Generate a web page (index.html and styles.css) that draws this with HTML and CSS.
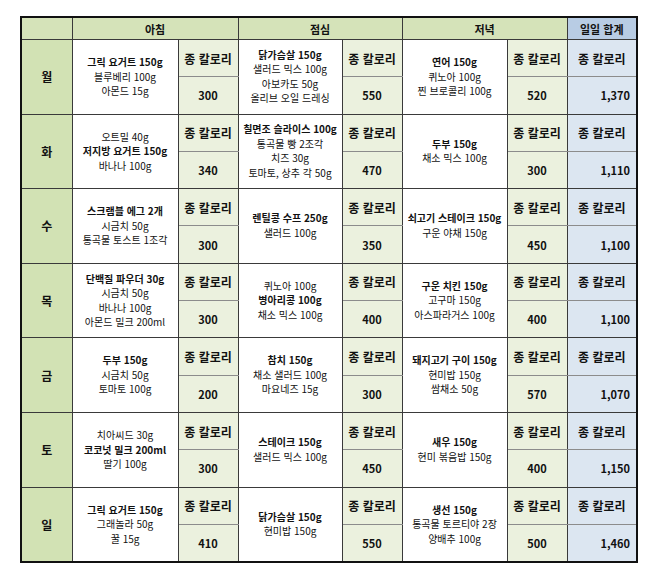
FILE: index.html
```html
<!DOCTYPE html>
<html lang="ko">
<head>
<meta charset="utf-8">
<title>주간 식단표</title>
<link rel="stylesheet" href="styles.css">
</head>
<body>
<table class="plan">
  <colgroup>
    <col class="c-day"><col class="c-food1"><col class="c-cal"><col class="c-food2"><col class="c-cal"><col class="c-food3"><col class="c-cal"><col class="c-total">
  </colgroup>
  <thead>
    <tr class="head">
      <th class="corner"></th>
      <th colspan="2" class="meal">아침</th>
      <th colspan="2" class="meal">점심</th>
      <th colspan="2" class="meal">저녁</th>
      <th class="total-head">일일 합계</th>
    </tr>
  </thead>
  <tbody>
    <tr class="top">
      <th rowspan="2" class="day">월</th>
      <td rowspan="2" class="food"><b>그릭 요거트 150g</b><br>블루베리 100g<br>아몬드 15g</td>
      <td class="label">종 칼로리</td>
      <td rowspan="2" class="food"><b>닭가슴살 150g</b><br>샐러드 믹스 100g<br>아보카도 50g<br>올리브 오일 드레싱</td>
      <td class="label">종 칼로리</td>
      <td rowspan="2" class="food"><b>연어 150g</b><br>퀴노아 100g<br>찐 브로콜리 100g</td>
      <td class="label">종 칼로리</td>
      <td class="tlabel">종 칼로리</td>
    </tr>
    <tr class="bottom">
      <td class="num">300</td><td class="num">550</td><td class="num">520</td><td class="tnum">1,370</td>
    </tr>

    <tr class="top">
      <th rowspan="2" class="day">화</th>
      <td rowspan="2" class="food">오트밀 40g<br><b>저지방 요거트 150g</b><br>바나나 100g</td>
      <td class="label">종 칼로리</td>
      <td rowspan="2" class="food"><b>칠면조 슬라이스 100g</b><br>통곡물 빵 2조각<br>치즈 30g<br>토마토, 상추 각 50g</td>
      <td class="label">종 칼로리</td>
      <td rowspan="2" class="food"><b>두부 150g</b><br>채소 믹스 100g</td>
      <td class="label">종 칼로리</td>
      <td class="tlabel">종 칼로리</td>
    </tr>
    <tr class="bottom">
      <td class="num">340</td><td class="num">470</td><td class="num">300</td><td class="tnum">1,110</td>
    </tr>

    <tr class="top">
      <th rowspan="2" class="day">수</th>
      <td rowspan="2" class="food"><b>스크램블 에그 2개</b><br>시금치 50g<br>통곡물 토스트 1조각</td>
      <td class="label">종 칼로리</td>
      <td rowspan="2" class="food"><b>렌틸콩 수프 250g</b><br>샐러드 100g</td>
      <td class="label">종 칼로리</td>
      <td rowspan="2" class="food"><b>쇠고기 스테이크 150g</b><br>구운 야채 150g</td>
      <td class="label">종 칼로리</td>
      <td class="tlabel">종 칼로리</td>
    </tr>
    <tr class="bottom">
      <td class="num">300</td><td class="num">350</td><td class="num">450</td><td class="tnum">1,100</td>
    </tr>

    <tr class="top">
      <th rowspan="2" class="day">목</th>
      <td rowspan="2" class="food"><b>단백질 파우더 30g</b><br>시금치 50g<br>바나나 100g<br>아몬드 밀크 200ml</td>
      <td class="label">종 칼로리</td>
      <td rowspan="2" class="food">퀴노아 100g<br><b>병아리콩 100g</b><br>채소 믹스 100g</td>
      <td class="label">종 칼로리</td>
      <td rowspan="2" class="food"><b>구운 치킨 150g</b><br>고구마 150g<br>아스파라거스 100g</td>
      <td class="label">종 칼로리</td>
      <td class="tlabel">종 칼로리</td>
    </tr>
    <tr class="bottom">
      <td class="num">300</td><td class="num">400</td><td class="num">400</td><td class="tnum">1,100</td>
    </tr>

    <tr class="top">
      <th rowspan="2" class="day">금</th>
      <td rowspan="2" class="food"><b>두부 150g</b><br>시금치 50g<br>토마토 100g</td>
      <td class="label">종 칼로리</td>
      <td rowspan="2" class="food"><b>참치 150g</b><br>채소 샐러드 100g<br>마요네즈 15g</td>
      <td class="label">종 칼로리</td>
      <td rowspan="2" class="food"><b>돼지고기 구이 150g</b><br>현미밥 150g<br>쌈채소 50g</td>
      <td class="label">종 칼로리</td>
      <td class="tlabel">종 칼로리</td>
    </tr>
    <tr class="bottom">
      <td class="num">200</td><td class="num">300</td><td class="num">570</td><td class="tnum">1,070</td>
    </tr>

    <tr class="top">
      <th rowspan="2" class="day">토</th>
      <td rowspan="2" class="food">치아씨드 30g<br><b>코코넛 밀크 200ml</b><br>딸기 100g</td>
      <td class="label">종 칼로리</td>
      <td rowspan="2" class="food"><b>스테이크 150g</b><br>샐러드 믹스 100g</td>
      <td class="label">종 칼로리</td>
      <td rowspan="2" class="food"><b>새우 150g</b><br>현미 볶음밥 150g</td>
      <td class="label">종 칼로리</td>
      <td class="tlabel">종 칼로리</td>
    </tr>
    <tr class="bottom">
      <td class="num">300</td><td class="num">450</td><td class="num">400</td><td class="tnum">1,150</td>
    </tr>

    <tr class="top">
      <th rowspan="2" class="day">일</th>
      <td rowspan="2" class="food"><b>그릭 요거트 150g</b><br>그래놀라 50g<br>꿀 15g</td>
      <td class="label">종 칼로리</td>
      <td rowspan="2" class="food"><b>닭가슴살 150g</b><br>현미밥 150g</td>
      <td class="label">종 칼로리</td>
      <td rowspan="2" class="food"><b>생선 150g</b><br>통곡물 토르티야 2장<br>양배추 100g</td>
      <td class="label">종 칼로리</td>
      <td class="tlabel">종 칼로리</td>
    </tr>
    <tr class="bottom">
      <td class="num">410</td><td class="num">550</td><td class="num">500</td><td class="tnum">1,460</td>
    </tr>
  </tbody>
</table>
</body>
</html>
```

FILE: styles.css
```css
html, body {
  margin: 0;
  padding: 0;
  background: #ffffff;
}

body {
  padding: 16px 0 0 20px;
  font-family: "Noto Sans CJK KR", "Noto Sans", sans-serif;
  color: #111;
}

.plan {
  border-collapse: collapse;
  table-layout: fixed;
  width: 616px;
  border: 2px solid #111;
}

.c-day { width: 51px; }
.c-food1 { width: 106px; }
.c-cal { width: 60px; }
.c-food2 { width: 104px; }
.c-food3 { width: 105px; }
.c-total { width: 70px; }

.plan th,
.plan td {
  border: 1px solid #3a3a3a;
  padding: 0;
  text-align: center;
  vertical-align: middle;
}

.head th {
  height: 21px;
  background: #d5e3b9;
  font-size: 11px;
  font-weight: 700;
}

.head .total-head {
  background: #b8cce4;
}

.top td,
.top th {
  height: 36.3px;
}

.bottom td {
  height: 36.3px;
}

.day {
  background: #d2e2b4;
  font-size: 12px;
  font-weight: 700;
}

.food {
  background: #ffffff;
  font-size: 10px;
  line-height: 14.5px;
  font-weight: 400;
  white-space: nowrap;
}

.food b {
  font-weight: 700;
}

.label {
  background: #ebf1de;
  font-size: 12px;
  font-weight: 700;
  border-bottom-color: #8c8c8c !important;
}

.num {
  background: #ebf1de;
  font-size: 11px;
  font-weight: 700;
}

.tlabel {
  background: #dce6f1;
  font-size: 12px;
  font-weight: 700;
  border-bottom-color: #8c8c8c !important;
}

.tnum {
  background: #dce6f1;
  font-size: 11px;
  font-weight: 700;
  text-align: right !important;
  padding-right: 6px !important;
}
```
